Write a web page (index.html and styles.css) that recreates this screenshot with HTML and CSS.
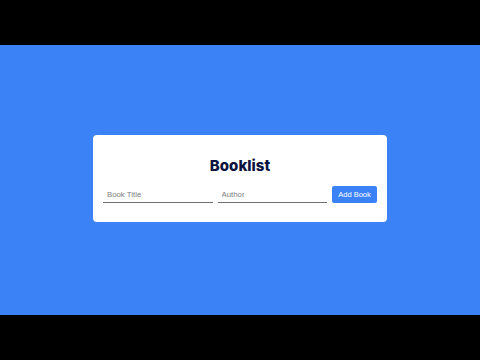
FILE: index.html
```html
<!DOCTYPE html>
<html>
<head>
<meta charset="utf-8">
<link rel="stylesheet" href="styles.css">
</head>
<body>
<div class="frame">
  <main class="stage">
    <section class="card">
      <h1 class="title">Booklist</h1>
      <form class="row">
        <input class="field" type="text" placeholder="Book Title">
        <input class="field" type="text" placeholder="Author">
        <button class="btn" type="button">Add Book</button>
      </form>
    </section>
  </main>
</div>
</body>
</html>
```
FILE: styles.css
```css
html, body {
  margin: 0;
  padding: 0;
  background: #000;
  width: 480px;
  height: 360px;
  overflow: hidden;
}
.frame {
  height: 360px;
  display: flex;
  flex-direction: column;
  justify-content: center;
}
.stage {
  height: 270px;
  background: #3b82f6;
  display: flex;
  align-items: center;
  justify-content: center;
  padding-bottom: 3px;
  box-sizing: border-box;
}
.card {
  width: 294px;
  box-sizing: border-box;
  background: #fff;
  border-radius: 4px;
  padding: 22px 10px 19px;
}
.title {
  margin: 0 0 11px;
  text-align: center;
  font-family: Inter, "Noto Sans", sans-serif;
  font-weight: 800;
  font-size: 15px;
  line-height: 18px;
  color: #0c1340;
}
.row {
  display: flex;
  gap: 5px;
  align-items: flex-end;
  margin: 0;
}
.field {
  flex: 1;
  min-width: 0;
  height: 17px;
  box-sizing: border-box;
  border: none;
  border-bottom: 1px solid #6f6f6f;
  padding: 0 4px;
  font-family: "Liberation Sans", Arial, sans-serif;
  font-size: 7.8px;
  color: #333;
  background: transparent;
  outline: none;
}
.field::placeholder {
  color: #7d7d7d;
}
.btn {
  height: 17px;
  width: 45px;
  box-sizing: border-box;
  padding: 0;
  border: none;
  border-radius: 2px;
  background: #3b82f6;
  color: #fff;
  font-family: "Liberation Sans", Arial, sans-serif;
  font-size: 7.5px;
}
```
